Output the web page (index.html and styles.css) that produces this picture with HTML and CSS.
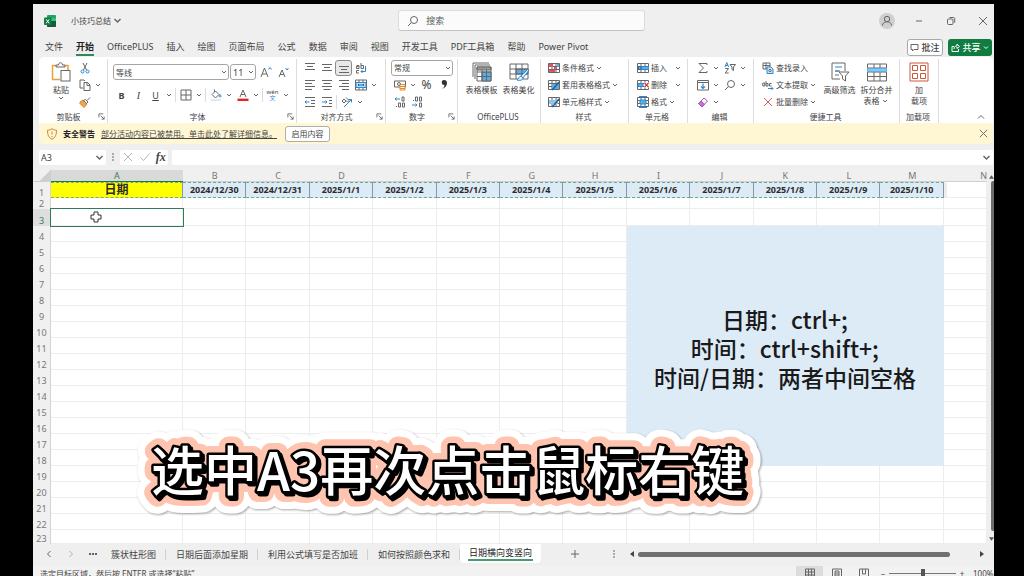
FILE: index.html
```html
<!DOCTYPE html>
<html lang="zh-CN">
<head>
    <meta charset="UTF-8">
    <meta name="viewport" content="width=device-width, initial-scale=1.0">
    <title>小技巧总结 - Excel</title>
    <link rel="stylesheet" href="styles.css">
</head>
<body>
    <svg class="sprite" aria-hidden="true">
        <symbol id="chev" viewBox="0 0 6 6"><path d="M1 2l2 2 2-2"/></symbol>
        <symbol id="launch" viewBox="0 0 8 8"><path d="M1 5V1h5M3 3l4 4M7 4v3H4"/></symbol>
        <symbol id="mag" viewBox="0 0 12 12"><circle cx="7" cy="5" r="3.5"/><path d="M4.5 7.5L1 11"/></symbol>
        <symbol id="cross" viewBox="0 0 12 12"><path d="M2 2l8 8M10 2l-8 8"/></symbol>
        <symbol id="table" viewBox="0 0 12 12"><path d="M.5 1.5h11v9H.5zM.5 4.500h11M.5 7.500h11M4 1.500v9M8 1.500v9"/></symbol>
    </svg>

    <div class="window">
        <header class="titlebar">
            <div class="title-left">
                <svg class="excel-logo" viewBox="0 0 12 12"><rect x="3" y="0" width="9" height="12" rx="1" fill="#21a366"/><path d="M3 6h9v5a1 1 0 0 1-1 1H4a1 1 0 0 1-1-1z" fill="#185c37"/><path d="M7 3h5v3H7z" fill="#33c481"/><rect x="0" y="2.500" width="7.500" height="7.500" rx="1" fill="#107c41"/><path d="M2.200 4.300l3 4M5.200 4.300l-3 4" stroke="#fff" stroke-width="1"/></svg>
                <span>小技巧总结</span>
                <svg class="ico chev-lg"><use href="#chev"/></svg>
            </div>
            <label class="search">
                <svg class="ico"><use href="#mag"/></svg>
                <input type="text" placeholder="搜索" aria-label="搜索">
            </label>
            <div class="title-right">
                <button class="win-btn" aria-label="账户"><svg class="avatar" viewBox="0 0 16 16"><circle cx="8" cy="8" r="8" fill="#cfcfcf" stroke="none"/><circle cx="8" cy="6" r="2.700"/><path d="M3.500 12.500c0-5 9-5 9 0"/></svg></button>
                <button class="win-btn" aria-label="最小化"><svg class="ico" viewBox="0 0 12 12"><path d="M3 6h6"/></svg></button>
                <button class="win-btn" aria-label="还原"><svg class="ico" viewBox="0 0 12 12"><rect x="2.500" y="4" width="5.500" height="5.500" rx="1"/><path d="M4.500 2.500h4a1.200 1.200 0 0 1 1.200 1.200v4"/></svg></button>
                <button class="win-btn" aria-label="关闭"><svg class="ico"><use href="#cross"/></svg></button>
            </div>
        </header>

        <nav class="tabs">
            <a href="#" class="tab">文件</a>
            <a href="#" class="tab active">开始</a>
            <a href="#" class="tab">OfficePLUS</a>
            <a href="#" class="tab">插入</a>
            <a href="#" class="tab">绘图</a>
            <a href="#" class="tab">页面布局</a>
            <a href="#" class="tab">公式</a>
            <a href="#" class="tab">数据</a>
            <a href="#" class="tab">审阅</a>
            <a href="#" class="tab">视图</a>
            <a href="#" class="tab">开发工具</a>
            <a href="#" class="tab">PDF工具箱</a>
            <a href="#" class="tab">帮助</a>
            <a href="#" class="tab">Power Pivot</a>
            <div class="tab-actions">
                <button class="comment-btn"><svg viewBox="0 0 9 9"><path d="M1 1.500h7v5H4L2.500 8V6.500H1z"/></svg>批注</button>
                <button class="share-btn"><svg viewBox="0 0 9 9"><path d="M3 3.500H1v5h6.500V6M3 6c0-2 1-3 3-3V1l2.500 2.500L6 5.500V4"/></svg>共享<svg class="chev"><use href="#chev"/></svg></button>
            </div>
        </nav>

        <section class="ribbon">
            <div class="group g-clip">
                <div class="group-body">
                    <button class="big">
                        <svg class="big-ico" viewBox="0 0 20 20"><path d="M5 3.500H1.500v14H9M14 3.500h3V8" stroke="#e8a33d" stroke-width="1.500"/><path d="M5 5V3h2.500c0-3 4-3 4 0H14v2z"/><rect x="10" y="8.500" width="9" height="10.500" fill="#fff"/></svg>
                        <span>粘贴</span>
                        <svg class="chev"><use href="#chev"/></svg>
                    </button>
                    <div class="rows">
                        <div class="row"><button class="sm" aria-label="剪切"><svg class="ico" viewBox="0 0 12 12"><path d="M4 1l3.500 7M8 1L4.500 8"/><circle cx="3.500" cy="9.500" r="1.500" stroke="#2b88d0"/><circle cx="8.500" cy="9.500" r="1.500" stroke="#2b88d0"/></svg></button></div>
                        <div class="row"><button class="sm" aria-label="复制"><svg class="ico" viewBox="0 0 12 12"><path d="M4.500 9H1V1h4l1 1"/><path d="M5 3.500h3.500l2.500 2.500v5.500H5zM8 3.500v3h3"/></svg></button><svg class="chev"><use href="#chev"/></svg></div>
                        <div class="row"><button class="sm" aria-label="格式刷"><svg class="ico" viewBox="0 0 12 12"><path d="M1 6l3-2 4 4-3 3.500-4-4z" fill="#f0a64c" stroke="#d98324"/><path d="M4.500 4.500l3 3L9 6 6.500 3.500zM8 4.500L11 1.500"/></svg></button></div>
                    </div>
                </div>
                <div class="group-foot"><span>剪贴板</span><svg class="launch"><use href="#launch"/></svg></div>
            </div>

            <div class="group g-font">
                <div class="group-body font-body">
                    <div class="font-row">
                        <div class="combo combo-font"><select aria-label="字体"><option>等线</option></select><svg class="chev"><use href="#chev"/></svg></div>
                        <div class="combo combo-size"><select aria-label="字号"><option>11</option></select><svg class="chev"><use href="#chev"/></svg></div>
                        <button class="sm" aria-label="增大字号"><svg class="ico" viewBox="0 0 12 12"><path d="M1 11l3.500-9L8 11M2.200 8h4.600"/><path d="M8.500 3.500l1.500-2 1.500 2" stroke="#2b88d0"/></svg></button>
                        <button class="sm" aria-label="减小字号"><svg class="ico" viewBox="0 0 12 12"><path d="M2 11l3-7 3 7M3 8.500h4"/><path d="M8.500 2l1.500 2 1.500-2" stroke="#2b88d0"/></svg></button>
                    </div>
                    <div class="font-row">
                        <button class="sm bold">B</button><button class="sm italic">I</button><button class="sm under">U</button><svg class="chev"><use href="#chev"/></svg>
                        <i class="vsep"></i>
                        <button class="sm" aria-label="边框"><svg class="ico" viewBox="0 0 12 12"><path d="M1 1h10v10H1zM6 1v10M1 6h10"/></svg></button><svg class="chev"><use href="#chev"/></svg>
                        <i class="vsep"></i>
                        <button class="sm" aria-label="填充颜色"><svg class="ico" viewBox="0 0 12 12"><path d="M2 5.500l3.500-3.500 3.500 3.500L5.500 9zM4.500 3V.500"/><path d="M10 5.500c1.500 2 1 2.500 0 2.500s-1-1 0-2.500z" stroke="#2b88d0"/><path d="M1 11h10" stroke="#ddebf7" stroke-width="2"/></svg></button><svg class="chev"><use href="#chev"/></svg>
                        <button class="sm" aria-label="字体颜色"><svg class="ico" viewBox="0 0 12 12"><path d="M3 8l3-7 3 7M4 5.500h4"/><path d="M.5 10.800h11" stroke="#e0242c" stroke-width="2.400"/></svg></button><svg class="chev"><use href="#chev"/></svg>
                        <i class="vsep"></i>
                        <button class="sm pinyin" aria-label="拼音指南"><span>wén</span><span class="blue">文</span></button><svg class="chev"><use href="#chev"/></svg>
                    </div>
                </div>
                <div class="group-foot"><span>字体</span><svg class="launch"><use href="#launch"/></svg></div>
            </div>

            <div class="group g-align">
                <div class="group-body">
                    <div class="rows">
                        <div class="row">
                            <button class="sm" aria-label="顶端对齐"><svg class="ico" viewBox="0 0 12 12"><path d="M1 1.500h10M3 4.500h6M1 7.500h10"/></svg></button>
                            <button class="sm" aria-label="垂直居中"><svg class="ico" viewBox="0 0 12 12"><path d="M1 2.500h10M3 5.500h6M1 8.500h10"/></svg></button>
                            <button class="sm pressed" aria-label="底端对齐"><svg class="ico" viewBox="0 0 12 12"><path d="M1 4.500h10M3 7.500h6M1 10.500h10"/></svg></button>
                            <button class="sm" aria-label="自动换行"><svg class="ico" viewBox="0 0 12 12"><path d="M1.500 3.500h2.500v3H1.500v-2h2M6 1v5.500h2.500v-3H6M4 8.500H1.500v2.500H4"/><path d="M10.500 4v5.500H6M7.500 8L6 9.500 7.500 11" stroke="#2b88d0"/></svg></button>
                        </div>
                        <div class="row">
                            <button class="sm" aria-label="左对齐"><svg class="ico" viewBox="0 0 12 12"><path d="M1 1.500h10M1 4.500h7M1 7.500h10M1 10.500h7"/></svg></button>
                            <button class="sm" aria-label="居中"><svg class="ico" viewBox="0 0 12 12"><path d="M1 1.500h10M2.500 4.500h7M1 7.500h10M2.500 10.500h7"/></svg></button>
                            <button class="sm" aria-label="右对齐"><svg class="ico" viewBox="0 0 12 12"><path d="M1 1.500h10M4 4.500h7M1 7.500h10M4 10.500h7"/></svg></button>
                            <button class="sm" aria-label="合并后居中"><svg class="ico" viewBox="0 0 12 12"><path d="M.5 1h11v10H.5zM4 1v2M8 1v2M4 9v2M8 9v2"/><path d="M1 3.500h10v5H1z" fill="#bfe0f7" stroke="#2b88d0"/><path d="M3 6h6M4 5L3 6l1 1M8 5l1 1-1 1" stroke="#1d5f96"/></svg></button>
                            <svg class="chev"><use href="#chev"/></svg>
                        </div>
                        <div class="row">
                            <button class="sm" aria-label="减少缩进"><svg class="ico" viewBox="0 0 12 12"><path d="M1 1.500h10M7 4.500h4M7 7.500h4M1 10.500h10"/><path d="M5.500 6H1M2.500 4.500L1 6l1.500 1.500" stroke="#2b88d0"/></svg></button>
                            <button class="sm" aria-label="增加缩进"><svg class="ico" viewBox="0 0 12 12"><path d="M1 1.500h10M8 4.500h3M8 7.500h3M1 10.500h10"/><path d="M1 6h5M4.500 4.500L6 6 4.500 7.500" stroke="#2b88d0"/></svg></button>
                            <i class="vsep"></i>
                            <button class="sm" aria-label="方向"><svg class="ico" viewBox="0 0 12 12"><path d="M1 5l2-2 2 2-2 2zM5 1.500l3 3-1.500 1.500-1.500-1.500"/><path d="M3 11l7.500-7.500M7.500 3.500h3v3" stroke="#2b88d0"/></svg></button>
                            <svg class="chev"><use href="#chev"/></svg>
                        </div>
                    </div>
                </div>
                <div class="group-foot"><span>对齐方式</span><svg class="launch"><use href="#launch"/></svg></div>
            </div>

            <div class="group g-num">
                <div class="group-body">
                    <div class="rows">
                        <div class="row"><div class="combo combo-num"><select aria-label="数字格式"><option>常规</option></select><svg class="chev"><use href="#chev"/></svg></div></div>
                        <div class="row">
                            <button class="sm" aria-label="会计数字格式"><svg class="ico" viewBox="0 0 12 12"><path d="M.5 2h11v6H.5z"/><circle cx="5" cy="5" r="1.500"/><path d="M6 5.500h5V11H6zM6 7.500h5M6 9.500h5" fill="#fff" stroke="#e08a2c"/></svg></button><svg class="chev"><use href="#chev"/></svg>
                            <button class="sm percent">%</button>
                            <button class="sm" aria-label="千位分隔样式"><svg class="ico" viewBox="0 0 12 12"><path d="M6 1a2.500 2.500 0 1 0 .5 5C6.500 7.500 5.500 9 4 10c3-1 5-3 5-6A3 3 0 0 0 6 1z" fill="#333" stroke="none"/></svg></button>
                        </div>
                        <div class="row">
                            <button class="sm" aria-label="增加小数位数"><svg class="ico" viewBox="0 0 12 12"><path d="M8 1h2v4H8zM4.500 7h2v4h-2zM8.500 7h2v4h-2zM2 10.500h1"/><path d="M6 3H1M2.500 1.500L1 3l1.500 1.500" stroke="#2b88d0"/></svg></button>
                            <button class="sm" aria-label="减少小数位数"><svg class="ico" viewBox="0 0 12 12"><path d="M4.500 1h2v4h-2zM8.500 1h2v4h-2zM8.500 7h2v4h-2zM2 4.500h1"/><path d="M1 9h5M4.500 7.500L6 9l-1.500 1.500" stroke="#2b88d0"/></svg></button>
                        </div>
                    </div>
                </div>
                <div class="group-foot"><span>数字</span><svg class="launch"><use href="#launch"/></svg></div>
            </div>

            <div class="group g-plus">
                <div class="group-body">
                    <button class="big">
                        <svg class="big-ico" viewBox="0 0 20 20"><path d="M1 15V1h16M3 17V3h15"/><path d="M5 5h14v14H5z" fill="#fff"/><path d="M10 10h9v9h-9z" fill="#5aaee8"/><path d="M5 5h14v3H5z" fill="#999"/><path d="M5 10h14M5 14.500h14M10 8v11M14.500 8v11"/></svg>
                        <span>表格模板</span>
                    </button>
                    <button class="big">
                        <svg class="big-ico" viewBox="0 0 20 20"><path d="M1 2h18v15H1z"/><path d="M7 7h12v5H7z" fill="#5aaee8"/><path d="M1 7h18M1 12h18M7 2v15M13 2v15"/><path d="M19 7l-7 7 2 2 6-8zM12 14c-2 0-2 3-4 4 3 1 6 0 6-2z" fill="#dff0fb" stroke="#2b88d0"/></svg>
                        <span>表格美化</span>
                    </button>
                </div>
                <div class="group-foot"><span>OfficePLUS</span></div>
            </div>

            <div class="group g-style">
                <div class="group-body">
                    <div class="rows">
                        <button class="item"><svg class="ico" viewBox="0 0 12 12"><use href="#table"/><path d="M1 2h4v3H1zM1 8h6v2H1zM6 5h3v2H6z" fill="#e25560" stroke="none"/><path d="M9 2h2v3H9z" fill="#5aaee8" stroke="none"/></svg>条件格式<svg class="chev"><use href="#chev"/></svg></button>
                        <button class="item"><svg class="ico" viewBox="0 0 12 12"><use href="#table"/><path d="M4 5h7v5H4z" fill="#5aaee8" stroke="none"/><path d="M11 3L6 9l-2 2" stroke="#1d5f96" stroke-width="1.500"/></svg>套用表格格式<svg class="chev"><use href="#chev"/></svg></button>
                        <button class="item"><svg class="ico" viewBox="0 0 12 12"><use href="#table"/><path d="M1 4h9v4H1z" fill="#8cc6ee" stroke="none"/><path d="M11 3L6 9l-2 2" stroke="#1d5f96" stroke-width="1.500"/></svg>单元格样式<svg class="chev"><use href="#chev"/></svg></button>
                    </div>
                </div>
                <div class="group-foot"><span>样式</span></div>
            </div>

            <div class="group g-cell">
                <div class="group-body">
                    <div class="rows">
                        <button class="item wide"><svg class="ico" viewBox="0 0 12 12"><use href="#table"/><path d="M4 4.500h8v3H4z" fill="#5aaee8" stroke="#2b88d0"/><path d="M5 6H1M2.500 4.500L1 6l1.500 1.500" stroke="#1d5f96"/></svg>插入<svg class="chev"><use href="#chev"/></svg></button>
                        <button class="item wide"><svg class="ico" viewBox="0 0 12 12"><use href="#table"/><path d="M1 4.500h5v3H1z" fill="#5aaee8" stroke="#2b88d0"/><path d="M7 3.500h5v5H7z" fill="#fff" stroke="none"/><path d="M7.500 4l4 4M11.500 4l-4 4" stroke="#d8343f" stroke-width="1.200"/></svg>删除<svg class="chev"><use href="#chev"/></svg></button>
                        <button class="item"><svg class="ico" viewBox="0 0 12 12"><use href="#table"/><path d="M3 4h6v4H3z" fill="#5aaee8" stroke="#2b88d0"/><path d="M2 .5h8M2 11.500h8" stroke="#2b88d0"/></svg>格式<svg class="chev"><use href="#chev"/></svg></button>
                    </div>
                </div>
                <div class="group-foot"><span>单元格</span></div>
            </div>

            <div class="group g-edit">
                <div class="group-body">
                    <div class="rows">
                        <div class="row">
                            <button class="sm" aria-label="自动求和"><svg class="ico" viewBox="0 0 12 12"><path d="M10 3V1.500H2L6.500 6 2 10.500h8V9"/></svg></button><svg class="chev"><use href="#chev"/></svg>
                            <button class="sm" aria-label="排序和筛选"><svg class="ico" viewBox="0 0 12 12"><path d="M1 5l1.800-4.500L4.600 5M1.600 3.500h2.400" stroke="#2b88d0"/><path d="M1.200 6.500h3.300L1.200 11h3.500M6 2.500h5.500L9.500 5v3.500L8 7.500V5z"/></svg></button><svg class="chev"><use href="#chev"/></svg>
                        </div>
                        <div class="row">
                            <button class="sm" aria-label="填充"><svg class="ico" viewBox="0 0 12 12"><path d="M.5 1.500h11v9.500H.5zM.5 3.500h11"/><path d="M6 4.500v5M4 7.500l2 2 2-2" stroke="#2b88d0" stroke-width="1.200"/></svg></button><svg class="chev"><use href="#chev"/></svg>
                            <button class="sm" aria-label="查找和选择"><svg class="ico"><use href="#mag"/></svg></button><svg class="chev"><use href="#chev"/></svg>
                        </div>
                        <div class="row">
                            <button class="sm" aria-label="清除"><svg class="ico" viewBox="0 0 12 12"><path d="M1.500 7.500L7 2l3.500 3-5.500 6z" fill="#fff" stroke="#a64fb5"/><path d="M1.500 7.500L4 5l3.500 3.200L5 11z" fill="#c274cf" stroke="#a64fb5"/></svg></button><svg class="chev"><use href="#chev"/></svg>
                        </div>
                    </div>
                </div>
                <div class="group-foot"><span>编辑</span></div>
            </div>

            <div class="group g-tool">
                <div class="group-body">
                    <div class="rows">
                        <button class="item"><svg class="ico" viewBox="0 0 12 12"><path d="M1 1h7v6H1zM1 3.500h7M4 1v6"/><path d="M5 5h4l2 2v4.500H5z" fill="#cfe8f8" stroke="#2b88d0"/><circle cx="8" cy="8.500" r="1.200"/></svg>查找录入</button>
                        <button class="item"><svg class="ico" viewBox="0 0 12 12"><path d="M.8 4h2v3h-2zM4 2v5h2V4.500H4M9.500 4.500H7.500V7h2"/><path d="M6 9.500h5M9.500 8L11 9.500 9.500 11" stroke="#2b88d0"/></svg>文本提取<svg class="chev"><use href="#chev"/></svg></button>
                        <button class="item"><svg class="ico red"><use href="#cross"/></svg>批量删除<svg class="chev"><use href="#chev"/></svg></button>
                    </div>
                    <button class="big">
                        <svg class="big-ico" viewBox="0 0 20 20"><path d="M10 17H2V1h13v8M5 9h4M5 13h4"/><path d="M5 5h7M5 9h5" stroke="#2b88d0"/><path d="M9 10h10l-3.500 4v5L12.500 17v-3z" fill="#fff"/></svg>
                        <span>高级筛选</span>
                    </button>
                    <button class="big">
                        <svg class="big-ico" viewBox="0 0 20 20"><path d="M.5 2h19v4H.5zM.5 10h19v9H.5zM.5 14.500h19M7 2v4M13 2v4M7 10v9M13 10v9"/><path d="M.5 6.500h19v3H.5z" fill="#8cc6ee" stroke="#5aaee8"/></svg>
                        <span>拆分合并</span>
                        <span>表格<svg class="chev"><use href="#chev"/></svg></span>
                    </button>
                </div>
                <div class="group-foot"><span>便捷工具</span></div>
            </div>

            <div class="group g-addin">
                <div class="group-body">
                    <button class="big">
                        <svg class="big-ico orange" viewBox="0 0 20 20"><path d="M1 1h18v18H1zM3.500 3.500h5v5h-5zM11.500 3.500h5v5h-5zM3.500 11.500h5v5h-5zM11.500 11.500h5v5h-5z"/></svg>
                        <span>加</span>
                        <span>载项</span>
                    </button>
                </div>
                <div class="group-foot"><span>加载项</span></div>
            </div>

            <button class="collapse" aria-label="折叠功能区"><svg viewBox="0 0 8 8"><path d="M1 5.500l3-3 3 3"/></svg></button>
        </section>

        <div class="warning">
            <svg class="shield" viewBox="0 0 12 12"><path d="M6 .7c1.500 1.200 3 1.500 4.500 1.500 0 4.500-1 7.300-4.500 9C2.500 9.500 1.500 6.700 1.500 2.200 3 2.200 4.500 1.900 6 .7z"/><path d="M6 3.500v3M6 8v1"/></svg>
            <strong>安全警告</strong>
            <a href="#">部分活动内容已被禁用。单击此处了解详细信息。</a>
            <button class="enable">启用内容</button>
            <button class="warning-close" aria-label="关闭"><svg class="ico"><use href="#cross"/></svg></button>
        </div>

        <div class="formula">
            <div class="name-box"><input type="text" value="A3" aria-label="名称框"><svg class="ico chev-lg"><use href="#chev"/></svg></div>
            <svg class="dots" viewBox="0 0 2 10"><circle cx="1" cy="2" r=".8"/><circle cx="1" cy="5" r=".8"/><circle cx="1" cy="8" r=".8"/></svg>
            <div class="fx-box">
                <svg class="ico pale"><use href="#cross"/></svg>
                <svg class="ico pale" viewBox="0 0 12 12"><path d="M1.500 6.500l3 3 6-7"/></svg>
                <span class="fx">fx</span>
            </div>
            <div class="formula-box"><input type="text" aria-label="编辑栏"><svg class="ico chev-lg"><use href="#chev"/></svg></div>
        </div>

        <main class="sheet">
            <table class="grid">
                <colgroup><col class="c-head"><col class="c-a"><col><col><col><col><col><col><col><col><col><col><col><col><col class="c-n"></colgroup>
                <thead>
                    <tr><th class="corner"></th><th class="on">A</th><th>B</th><th>C</th><th>D</th><th>E</th><th>F</th><th>G</th><th>H</th><th>I</th><th>J</th><th>K</th><th>L</th><th>M</th><th class="last">N</th></tr>
                </thead>
                <tbody id="rows">
                    <tr class="dates"><th>1</th><td class="key">日期</td><td>2024/12/30</td><td>2024/12/31</td><td>2025/1/1</td><td>2025/1/2</td><td>2025/1/3</td><td>2025/1/4</td><td>2025/1/5</td><td>2025/1/6</td><td>2025/1/7</td><td>2025/1/8</td><td>2025/1/9</td><td>2025/1/10</td><td class="plain"></td></tr>
                    <tr class="short"><th>2</th><td></td><td></td><td></td><td></td><td></td><td></td><td></td><td></td><td></td><td></td><td></td><td></td><td></td><td></td></tr>
                    <tr class="tall"><th class="on">3</th><td class="selected"><svg class="cursor" viewBox="0 0 12 12"><path d="M4 1h4v3h3v4H8v3H4V8H1V4h3z"/></svg></td><td></td><td></td><td></td><td></td><td></td><td></td><td></td><td></td><td></td><td></td><td></td><td></td><td></td></tr>
                </tbody>
            </table>
            <div class="vscroll">
                <svg viewBox="0 0 6 6"><path d="M0 5l3-4 3 4z"/></svg>
                <div class="vthumb"></div>
                <svg viewBox="0 0 6 6"><path d="M0 1l3 4 3-4z"/></svg>
            </div>
        </main>

        <div class="sheet-tabs">
            <div class="tab-nav">
                <button aria-label="上一张"><svg viewBox="0 0 8 8"><path d="M5.500 1l-3 3 3 3"/></svg></button>
                <button class="off" aria-label="下一张"><svg viewBox="0 0 8 8"><path d="M2.500 1l3 3-3 3"/></svg></button>
                <button aria-label="更多"><svg class="solid" viewBox="0 0 8 8"><circle cx="1" cy="4" r="1"/><circle cx="4" cy="4" r="1"/><circle cx="7" cy="4" r="1"/></svg></button>
            </div>
            <a href="#" class="sheet-tab">簇状柱形图</a>
            <a href="#" class="sheet-tab">日期后面添加星期</a>
            <a href="#" class="sheet-tab">利用公式填写是否加班</a>
            <a href="#" class="sheet-tab">如何按照颜色求和</a>
            <a href="#" class="sheet-tab current"><span>日期横向变竖向</span></a>
            <button class="add" aria-label="新工作表"><svg viewBox="0 0 8 8"><path d="M4 0v8M0 4h8"/></svg></button>
            <div class="hscroll">
                <svg class="dots" viewBox="0 0 2 10"><circle cx="1" cy="2" r=".8"/><circle cx="1" cy="5" r=".8"/><circle cx="1" cy="8" r=".8"/></svg>
                <svg class="arrow" viewBox="0 0 6 6"><path d="M5 0v6L1 3z"/></svg>
                <div class="htrack"><div class="hthumb"></div></div>
                <svg class="arrow" viewBox="0 0 6 6"><path d="M1 0v6l4-3z"/></svg>
            </div>
        </div>

        <footer class="status">
            <span>选定目标区域，然后按 ENTER 或选择“粘贴”</span>
            <div class="status-right">
                <button class="view on" aria-label="普通"><svg viewBox="0 0 10 10"><path d="M.5 1h9v9h-9zM.5 4h9M.5 7h9M3.500 1v9M6.500 1v9"/></svg></button>
                <button class="view" aria-label="页面布局"><svg viewBox="0 0 10 10"><path d="M.5 1h9v9h-9zM3 3h4v7H3zM3 5h4M3 7h4"/></svg></button>
                <button class="view" aria-label="分页预览"><svg viewBox="0 0 10 10"><path d="M.5 1h9v9h-9zM3.500 1v5h3V1"/></svg></button>
                <button class="zoom-btn">−</button>
                <input class="zoom" type="range" min="10" max="190" value="100" aria-label="缩放">
                <button class="zoom-btn">+</button>
                <span class="zoom-value">100%</span>
            </div>
        </footer>
    </div>

    <svg class="caption" role="img" aria-label="选中A3再次点击鼠标右键">
        <defs><text id="cap" x="20" y="68">选中A3再次点击鼠标右键</text></defs>
        <use href="#cap" class="cap-halo" x="1" y="1"/>
        <use href="#cap" class="cap-peach" x="1" y="1"/>
        <use href="#cap" class="cap-black" x="3" y="3"/>
        <use href="#cap" class="cap-black" x="1" y="1"/>
        <use href="#cap" class="cap-black"/>
        <use href="#cap" class="cap-fill"/>
    </svg>

    <script src="script.js"></script>
</body>
</html>
```

FILE: styles.css
```css
:root {
    --chrome: #efefef;
    --line: #ededed;
    --ink: #444;
    --icon: #666;
    --green: #107c41;
    --blue: #2b88d0;
    --cell-blue: #ddebf7;
    --ui-font: "Noto Sans", "Noto Sans CJK SC", sans-serif;
}

* {
    margin: 0;
    padding: 0;
    box-sizing: border-box;
}

body {
    height: 100vh;
    padding: 4px 30px 0 33px;
    overflow: hidden;
    background: #000;
    color: var(--ink);
    font-family: var(--ui-font);
    font-size: 8px;
    line-height: 11px;
}

button, input, select {
    font: inherit;
    color: inherit;
    border: none;
    background: none;
    outline: none;
}

a {
    color: inherit;
    text-decoration: none;
}

svg {
    display: block;
    flex: none;
    fill: none;
    stroke: var(--icon);
}

.sprite {
    position: absolute;
    width: 0;
    height: 0;
}

.ico {
    width: 12px;
    height: 12px;
}

.chev {
    width: 6px;
    height: 6px;
    margin: 0 2px;
}

.chev-lg {
    width: 9px;
    height: 9px;
}

.window {
    display: flex;
    flex-direction: column;
    height: 100%;
    background: var(--chrome);
}

/* title bar */
.titlebar {
    display: grid;
    grid-template-columns: 38% 247px 1fr;
    align-items: center;
    height: 33px;
}

.title-left {
    display: flex;
    align-items: center;
    padding-left: 11px;
}

.title-left span {
    margin: 0 2px 0 15px;
}

.excel-logo {
    width: 12px;
    height: 12px;
    stroke: none;
}

.search {
    display: flex;
    align-items: center;
    gap: 7px;
    height: 21px;
    padding: 0 8px;
    background: #fbfbfb;
    border: 1px solid #dcdcdc;
    border-bottom-color: #c4c4c4;
    border-radius: 3px;
    font-size: 9px;
}

.search input {
    flex: 1;
}

.search input::placeholder {
    color: #5c5c5c;
}

.title-right {
    display: flex;
    justify-content: flex-end;
    gap: 10px;
}

.win-btn {
    display: flex;
    align-items: center;
    justify-content: center;
    width: 22px;
    height: 22px;
}

.avatar {
    width: 16px;
    height: 16px;
}

/* ribbon tabs */
.tabs {
    display: flex;
    align-items: center;
    gap: 13px;
    height: 20px;
    padding: 0 2px 0 12px;
    font-size: 9px;
}

.tab {
    height: 17px;
    line-height: 15px;
    white-space: nowrap;
}

.tab.active {
    border-bottom: 2px solid #2f8a5b;
    font-weight: 700;
    color: #222;
}

.tab-actions {
    display: flex;
    gap: 5px;
    margin-left: auto;
}

.tab-actions button {
    display: flex;
    align-items: center;
    justify-content: center;
    gap: 2px;
    height: 17px;
    border-radius: 3px;
    font-weight: 500;
}

.tab-actions svg {
    width: 9px;
    height: 9px;
}

.comment-btn {
    width: 36px;
    background: #fff;
    border: 1px solid #a8a8a8;
}

.share-btn {
    width: 44px;
    background: var(--green);
    color: #fff;
}

.share-btn svg {
    stroke: #fff;
}

.share-btn .chev {
    width: 6px;
    margin: 0;
}

/* ribbon */
.ribbon {
    display: flex;
    height: 66px;
    margin: 0 1px 0 6px;
    background: #fff;
    border-radius: 5px 5px 0 0;
}

.group {
    display: flex;
    flex-direction: column;
    flex: none;
    margin: 2px 0 0;
    border-right: 1px solid #dedede;
}

.group-body {
    display: flex;
    flex: none;
    height: 51px;
}

.group-foot {
    display: flex;
    align-items: center;
    height: 13px;
    padding-right: 2px;
    white-space: nowrap;
}

.group-foot span {
    flex: 1;
    text-align: center;
}

.launch {
    width: 7px;
    height: 7px;
}

.g-clip { width: 69px; }
.g-font { width: 189px; }
.g-align { width: 89px; }
.g-num { width: 72px; }
.g-plus { width: 83px; }
.g-style { width: 88px; }
.g-cell { width: 59px; }
.g-edit { width: 66px; }
.g-tool { width: 146px; }
.g-addin { width: 39px; }

.g-clip .group-body { padding-left: 7px; }
.g-align .group-body { padding-left: 4px; }
.g-num .group-body { padding-left: 5px; }
.g-plus .group-body { padding-left: 5px; }
.g-style .group-body { padding-left: 7px; }
.g-cell .group-body { padding-left: 8px; }
.g-edit .group-body { padding-left: 6px; }
.g-tool .group-body { padding-left: 8px; }
.g-addin .group-body { justify-content: center; }

.g-tool .rows {
    width: 59px;
}

.row, .item {
    display: flex;
    align-items: center;
    height: 17px;
    white-space: nowrap;
}

.item .ico {
    margin-right: 2px;
}

.item.wide .chev {
    margin-left: 8px;
}

.sm {
    display: flex;
    align-items: center;
    justify-content: center;
    width: 17px;
    height: 16px;
}

.pressed {
    border: 1px solid #8c8c8c;
    border-radius: 3px;
    background: #e8e8e8;
}

.red { stroke: #e0555f; }
.orange { stroke: #c9593b; }
.blue { color: var(--blue); }

.big {
    display: flex;
    flex-direction: column;
    align-items: center;
    width: 37px;
    padding-top: 3px;
    white-space: nowrap;
}

.big > span {
    display: flex;
    align-items: center;
    height: 11px;
}

.big-ico {
    width: 20px;
    height: 20px;
    margin-bottom: 2px;
}

.g-clip .big {
    width: 30px;
}

.font-body {
    flex-direction: column;
    justify-content: space-between;
    padding: 5px 0 7px 5px;
}

.font-row {
    display: flex;
    align-items: center;
}

.combo {
    display: grid;
    align-items: center;
    height: 16px;
    border: 1px solid #a6a6a6;
    border-radius: 3px;
    background: #fff;
}

.combo select, .combo .chev {
    grid-area: 1 / 1;
}

.combo select {
    appearance: none;
    width: 100%;
    padding-left: 2px;
}

.combo .chev {
    justify-self: end;
    margin-right: 1px;
    pointer-events: none;
}

.combo-font {
    width: 116px;
    margin-right: 1px;
}

.combo-size {
    width: 26px;
    margin-right: 1px;
}

.combo-size select {
    font-size: 9px;
}

.combo-num {
    width: 62px;
}

.bold {
    font-size: 9px;
    font-weight: 700;
}

.italic {
    font-family: "Liberation Serif", serif;
    font-size: 10px;
    font-style: italic;
}

.under {
    font-size: 9px;
    text-decoration: underline;
}

.percent {
    font-size: 12px;
}

.pinyin {
    flex-direction: column;
    font-size: 6px;
    line-height: 6px;
}

.vsep {
    width: 1px;
    height: 14px;
    margin: 0 1px;
    background: #dcdcdc;
}

.collapse {
    margin: auto 8px 2px auto;
}

.collapse svg {
    width: 8px;
    height: 8px;
}

/* message bar */
.warning {
    display: flex;
    align-items: center;
    height: 21px;
    margin: 0 1px 0 6px;
    padding: 0 4px 0 7px;
    background: #fff6d4;
    border-radius: 0 0 5px 5px;
    white-space: nowrap;
}

.shield {
    width: 12px;
    height: 12px;
    margin-right: 5px;
    stroke: #cf8427;
}

.warning strong {
    margin-right: 6px;
    color: #222;
}

.warning a {
    text-decoration: underline;
}

.enable {
    height: 16px;
    width: 45px;
    margin-left: 8px;
    border: 1px solid #adadad;
    border-radius: 3px;
    background: #fff;
}

.warning-close {
    margin-left: auto;
}

.warning-close .ico {
    width: 11px;
    height: 11px;
}

/* formula bar */
.formula {
    display: flex;
    align-items: center;
    height: 26px;
    padding: 0 1px 0 6px;
}

.name-box, .fx-box, .formula-box {
    display: flex;
    align-items: center;
    height: 15px;
    background: #fff;
    border-radius: 2px;
}

.name-box {
    width: 67px;
    padding: 0 2px;
}

.name-box input {
    flex: 1;
    min-width: 0;
    font-size: 9px;
}

.dots {
    width: 2px;
    height: 10px;
    margin: 0 6px;
    fill: #555;
    stroke: none;
}

.fx-box {
    justify-content: space-around;
    width: 48px;
    margin-right: 4px;
}

.pale {
    stroke: #b5b5b5;
}

.fx {
    font-family: "Liberation Serif", serif;
    font-size: 12px;
    font-style: italic;
    font-weight: 700;
}

.formula-box {
    flex: 1;
    padding-right: 2px;
}

.formula-box input {
    flex: 1;
}

/* worksheet */
.sheet {
    display: flex;
    flex: 1;
    min-height: 0;
    overflow: hidden;
}

.grid {
    flex: 1;
    width: 100%;
    height: 0;
    table-layout: fixed;
    border-spacing: 0;
    background: #fff;
}

.c-head { width: 18px; }
.c-a { width: 132px; }
.c-n { width: 43px; }

.grid th {
    background: #f0f0f0;
    color: #777;
    font-size: 9px;
    font-weight: 400;
    line-height: 10px;
}

.grid thead th {
    height: 12px;
    line-height: 11px;
    border-bottom: 1px solid #cfcfcf;
}

.grid thead .on {
    background: #d9d9d9;
    color: #3f7d5c;
    border-bottom: 1px solid var(--green);
}

.grid thead .corner {
    background: linear-gradient(135deg, #f0f0f0 60%, #cfcfcf 60%);
}

.grid thead .last {
    text-align: right;
}

.grid tbody th {
    border-right: 1px solid #d4d4d4;
    vertical-align: bottom;
}

.grid tbody .on {
    background: #dedede;
    color: #3f7d5c;
}

.grid td {
    height: 16px;
    border-right: 1px solid var(--line);
    border-bottom: 1px solid var(--line);
    text-align: center;
    line-height: 10px;
}

.grid .short td {
    height: 11px;
}

.grid .tall td {
    height: 17px;
}

.grid .dates td {
    background: var(--cell-blue);
    border-right: 1px solid #8496a8;
    border-bottom: 1px dashed #6fa88a;
    border-top: 1px dashed #6fa88a;
    color: #2b2b2b;
    font-size: 9px;
    font-weight: 700;
}

.grid .dates .key {
    background: #ff0;
    font-size: 12px;
    line-height: 14px;
}

.grid .dates .plain {
    background: #fff;
    border-color: var(--line);
    border-top-color: transparent;
    border-style: solid;
}

.grid .selected {
    outline: 1px solid #2f7d57;
}

.grid tr:last-child td {
    height: 14px;
}

.cursor {
    width: 12px;
    height: 12px;
    margin-left: 39px;
    fill: #fff;
    stroke: #333;
}

.grid .note {
    padding-top: 5px;
    background: var(--cell-blue);
    border-color: var(--cell-blue);
    color: #1a1a1a;
    font-family: "Noto Sans CJK SC", sans-serif;
    font-size: 23px;
    font-weight: 500;
    line-height: 29px;
    white-space: nowrap;
}

.vscroll {
    display: flex;
    flex-direction: column;
    align-items: flex-end;
    width: 7px;
    padding: 4px 0 2px;
}

.vscroll svg {
    width: 5px;
    height: 6px;
    fill: #555;
    stroke: none;
}

.vthumb {
    flex: 1;
    width: 3px;
    margin: 1px 0 5px;
    background: #6e6e6e;
    border-radius: 2px 0 0 2px;
}

/* sheet tabs */
.sheet-tabs {
    display: flex;
    height: 22px;
    font-size: 9px;
    white-space: nowrap;
}

.tab-nav {
    display: flex;
    gap: 14px;
    align-items: center;
    padding: 0 4px 2px 12px;
}

.tab-nav svg, .add svg {
    width: 8px;
    height: 8px;
}

.tab-nav .off {
    opacity: 0.45;
}

.tab-nav .solid {
    fill: #333;
    stroke: none;
}

.sheet-tab {
    padding: 5px 10px 0;
    background: linear-gradient(#d0d0d0, #d0d0d0) right 5px / 1px 11px no-repeat;
}

.sheet-tab.current {
    height: 19px;
    padding: 3px 8px 0;
    background: #fff;
    border-radius: 0 0 4px 4px;
    color: #222;
}

.sheet-tab.current span {
    display: block;
    padding: 0 1px 1px;
    border-bottom: 2px solid #4a9a70;
}

.add {
    padding: 0 30px 2px;
}

.hscroll {
    display: flex;
    align-items: center;
    flex: 1;
    padding: 0 9px 2px 0;
}

.hscroll .dots {
    margin: 0 14px 0 auto;
}

.arrow {
    width: 6px;
    height: 6px;
    fill: #444;
    stroke: none;
}

.htrack {
    width: 344px;
    padding: 0 29px 0 3px;
}

.hthumb {
    height: 5px;
    background: #707070;
    border-radius: 3px;
}

/* status bar, runs past the bottom edge */
.status {
    display: flex;
    align-items: center;
    justify-content: space-between;
    height: 14px;
    margin-bottom: -4px;
    padding-left: 7px;
    background: #f2f2f2;
}

.status-right {
    display: flex;
    align-items: center;
}

.view {
    display: flex;
    align-items: center;
    justify-content: center;
    width: 27px;
    height: 14px;
}

.view svg {
    width: 10px;
    height: 10px;
}

.view.on {
    background: #dcdcdc;
}

.zoom-btn {
    width: 12px;
}

.zoom {
    appearance: none;
    width: 67px;
    height: 10px;
    background: linear-gradient(#777, #777) center / 100% 1px no-repeat;
}

.zoom::-webkit-slider-thumb {
    appearance: none;
    width: 4px;
    height: 8px;
    background: #555;
}

.zoom-value {
    width: 26px;
    padding-left: 5px;
}

/* subtitle over the sheet */
.caption {
    position: absolute;
    left: 131px;
    top: 423px;
    width: 640px;
    height: 98px;
    font-family: "Noto Sans CJK SC", sans-serif;
    font-size: 53px;
    font-weight: 500;
    stroke-linejoin: round;
}

.cap-halo {
    fill: #fff;
    stroke: #fff;
    stroke-width: 34px;
    filter: drop-shadow(1px 1px 1px rgba(0, 0, 0, 0.35));
}

.cap-peach {
    fill: #fec4b0;
    stroke: #fec4b0;
    stroke-width: 20px;
}

.cap-black {
    fill: #000;
    stroke: #000;
    stroke-width: 5px;
}

.cap-fill {
    fill: #fff;
    stroke: none;
}
```

FILE: script.js
```javascript
const body = document.getElementById('rows');
const noteLines = ['日期：ctrl+;', '时间：ctrl+shift+;', '时间/日期：两者中间空格'];

// rows 4-18 carry the merged note in I:M, the rest are empty
for (let n = 4; n <= 23; n++) {
    const row = body.insertRow();
    const head = document.createElement('th');
    head.textContent = n;
    row.append(head);

    const merged = n <= 18;
    for (let c = 0; c < (merged ? 8 : 14); c++) row.insertCell();

    if (n === 4) {
        const note = row.insertCell();
        note.className = 'note';
        note.rowSpan = 15;
        note.colSpan = 5;
        note.innerHTML = noteLines.join('<br>');
    }
    if (merged) row.insertCell();
}
```
